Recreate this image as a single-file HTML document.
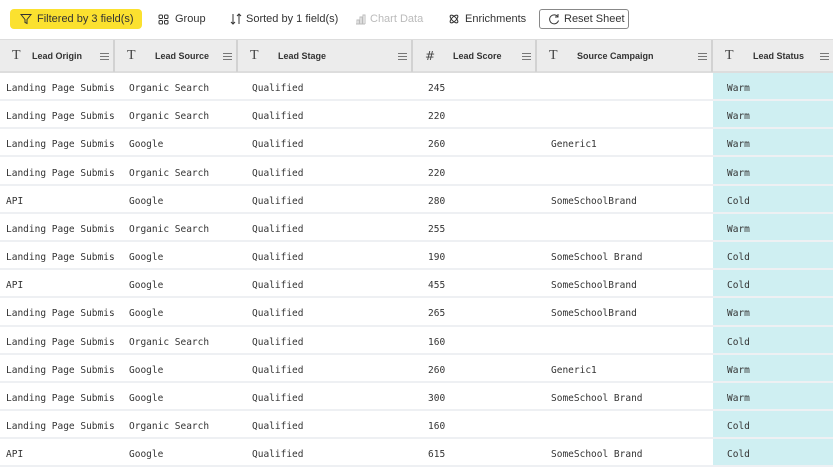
<!DOCTYPE html>
<html><head><meta charset="utf-8"><style>
*{margin:0;padding:0;box-sizing:border-box}
body{width:833px;height:465px;overflow:hidden;background:#fff;font-family:"Liberation Sans",sans-serif;position:relative}
.tb{position:absolute;top:0;left:0;width:833px;height:39px;background:#fff}
.btn{position:absolute;top:9px;height:20px;font-size:11px;color:#333;display:flex;align-items:center;white-space:nowrap}
.hdr{position:absolute;top:39px;left:0;width:833px;height:34px;background:#ececec;border-top:1px solid #ddd;border-bottom:2px solid #ddd}
.hc{position:absolute;top:0;height:32px;border-right:2px solid #d2d2d2;font-size:9px;font-weight:bold;color:#333;display:flex;align-items:center}
.hc .t{font-family:"Liberation Serif",serif;font-size:14px;font-weight:normal;position:absolute;left:12px;top:8px;color:#444}
.hc .n{position:absolute;left:40px;top:11px}
.hc .m{position:absolute;right:4px;top:13px;width:9px;height:7px;border-top:1px solid #777;border-bottom:1px solid #777}
.hc .m:after{content:"";position:absolute;left:0;right:0;top:2px;border-top:1px solid #777}
.row{position:absolute;left:0;width:833px;height:28.17px;border-bottom:2px solid #eef0f3;font-family:"DejaVu Sans Mono",monospace;font-size:9.5px;color:#333}
.row span{position:absolute;top:10px;white-space:nowrap;overflow:hidden}
.cy{position:absolute;left:713px;top:73px;width:120px;height:392px;background:#cfeff2}
</style></head><body>
<div class="tb">
<div class="btn" style="left:10px;width:132px;background:#fbe12f;border-radius:4px;padding-left:10px">
<svg width="12" height="12" viewBox="0 0 12 12" style="margin-right:5px"><path d="M1 1.5h10L7 6.5v4L5 9.5v-3z" fill="none" stroke="#333" stroke-width="1"/></svg>Filtered by 3 field(s)</div>
<div class="btn" style="left:158px"><svg width="11" height="11" viewBox="0 0 11 11" style="margin-right:6px"><rect x="1" y="1" width="3.5" height="3.5" rx="1" fill="none" stroke="#333"/><rect x="6.5" y="1" width="3.5" height="3.5" rx="1" fill="none" stroke="#333"/><rect x="1" y="6.5" width="3.5" height="3.5" rx="1" fill="none" stroke="#333"/><rect x="6.5" y="6.5" width="3.5" height="3.5" rx="1" fill="none" stroke="#333"/></svg>Group</div>
<div class="btn" style="left:230px"><svg width="12" height="12" viewBox="0 0 12 12" style="margin-right:4px"><path d="M3 1v10M1 9l2 2 2-2M9 11V1M7 3l2-2 2 2" fill="none" stroke="#333"/></svg>Sorted by 1 field(s)</div>
<div class="btn" style="left:355px;color:#bbb"><svg width="11" height="11" viewBox="0 0 11 11" style="margin-right:4px"><path d="M1 10h9M2 10V6h2v4M5 10V3h2v7M8 10V1h2v9" fill="none" stroke="#bbb"/></svg>Chart Data</div>
<div class="btn" style="left:448px"><svg width="12" height="12" viewBox="0 0 12 12" style="margin-right:5px"><ellipse cx="6" cy="6" rx="5" ry="2.2" transform="rotate(45 6 6)" fill="none" stroke="#333"/><ellipse cx="6" cy="6" rx="5" ry="2.2" transform="rotate(-45 6 6)" fill="none" stroke="#333"/></svg>Enrichments</div>
<div class="btn" style="left:539px;width:90px;border:1px solid #888;border-radius:3px;padding-left:8px"><svg width="12" height="12" viewBox="0 0 12 12" style="margin-right:4px"><path d="M10 4A4.5 4.5 0 1 0 10.5 7.5M10 1v3H7" fill="none" stroke="#333"/></svg>Reset Sheet</div>
</div>
<div class="hdr">
<div class="hc" style="left:0;width:115px"><span class="t">T</span><span class="n" style="left:32px">Lead Origin</span><span class="m"></span></div>
<div class="hc" style="left:115px;width:123px"><span class="t">T</span><span class="n">Lead Source</span><span class="m"></span></div>
<div class="hc" style="left:238px;width:175px"><span class="t">T</span><span class="n">Lead Stage</span><span class="m"></span></div>
<div class="hc" style="left:413px;width:124px"><span class="t" style="font-family:'DejaVu Sans',sans-serif;font-size:12px;top:9px">#</span><span class="n">Lead Score</span><span class="m"></span></div>
<div class="hc" style="left:537px;width:176px"><span class="t">T</span><span class="n">Source Campaign</span><span class="m"></span></div>
<div class="hc" style="left:713px;width:120px;border-right:none"><span class="t">T</span><span class="n">Lead Status</span><span class="m"></span></div>
</div>
<div class="cy"></div>
<div id="rows"></div>
<script>
var d=[["Landing Page Submis","Organic Search","245","","Warm"],["Landing Page Submis","Organic Search","220","","Warm"],["Landing Page Submis","Google","260","Generic1","Warm"],["Landing Page Submis","Organic Search","220","","Warm"],["API","Google","280","SomeSchoolBrand","Cold"],["Landing Page Submis","Organic Search","255","","Warm"],["Landing Page Submis","Google","190","SomeSchool Brand","Cold"],["API","Google","455","SomeSchoolBrand","Cold"],["Landing Page Submis","Google","265","SomeSchoolBrand","Warm"],["Landing Page Submis","Organic Search","160","","Cold"],["Landing Page Submis","Google","260","Generic1","Warm"],["Landing Page Submis","Google","300","SomeSchool Brand","Warm"],["Landing Page Submis","Organic Search","160","","Cold"],["API","Google","615","SomeSchool Brand","Cold"]];
var h="";d.forEach(function(r,i){h+='<div class="row" style="top:'+(73+i*28.17)+'px"><span style="left:6px;width:108px">'+r[0]+'</span><span style="left:129px">'+r[1]+'</span><span style="left:252px">Qualified</span><span style="left:428px">'+r[2]+'</span><span style="left:551px">'+r[3]+'</span><span style="left:727px">'+r[4]+'</span></div>'});
document.getElementById("rows").innerHTML=h;
</script>
</body></html>
